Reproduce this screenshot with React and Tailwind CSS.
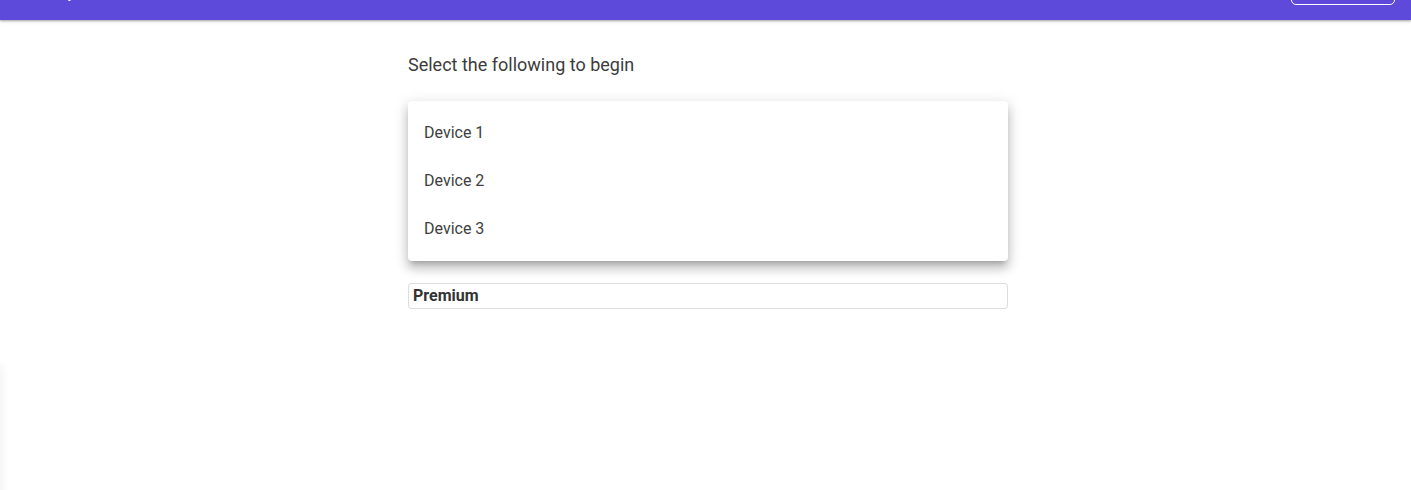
import React from "react";

export default function App() {
  return (
    <div className="min-h-[490px] bg-white relative overflow-hidden" style={{ fontFamily: "Roboto, 'Liberation Sans', sans-serif" }}>
      <header className="h-[20px] bg-[#5d4adb] shadow-[0_1px_2px_rgba(0,0,0,0.3),0_2px_4px_rgba(0,0,0,0.08)] overflow-hidden flex items-end justify-between relative z-10">
        <div className="pl-[54px] mb-[18px] text-white text-[20px] leading-[24px]">Apex</div>
        <button className="mr-[16px] mb-[15px] w-[104px] h-[36px] border border-white rounded-[5px] text-white text-sm shrink-0">
          LOGOUT
        </button>
      </header>
      <main className="mx-auto w-[605px] pl-[5px] pt-[31px]">
        <p className="text-[18px] leading-[27px] text-[#3c3c3c]">Select the following to begin</p>
        <ul className="mt-[23px] w-[600px] bg-white rounded-[4px] py-[8px] shadow-[0_5px_5px_-3px_rgba(0,0,0,0.2),0_8px_10px_1px_rgba(0,0,0,0.14),0_3px_14px_2px_rgba(0,0,0,0.12)]">
          <li className="h-[48px] flex items-center px-[16px] text-[16px] text-[#404040]">Device 1</li>
          <li className="h-[48px] flex items-center px-[16px] text-[16px] text-[#404040]">Device 2</li>
          <li className="h-[48px] flex items-center px-[16px] text-[16px] text-[#404040]">Device 3</li>
        </ul>
        <div className="mt-[22px] w-[600px] h-[26px] border border-[#dddddd] rounded-[3px] flex items-center pl-[4px] text-[16px] font-bold text-[#333333]">
          Premium
        </div>
      </main>
      <div className="absolute left-[-20px] top-[365px] w-[20px] h-[200px] shadow-[0_0_12px_rgba(0,0,0,0.08)]" />
    </div>
  );
}
